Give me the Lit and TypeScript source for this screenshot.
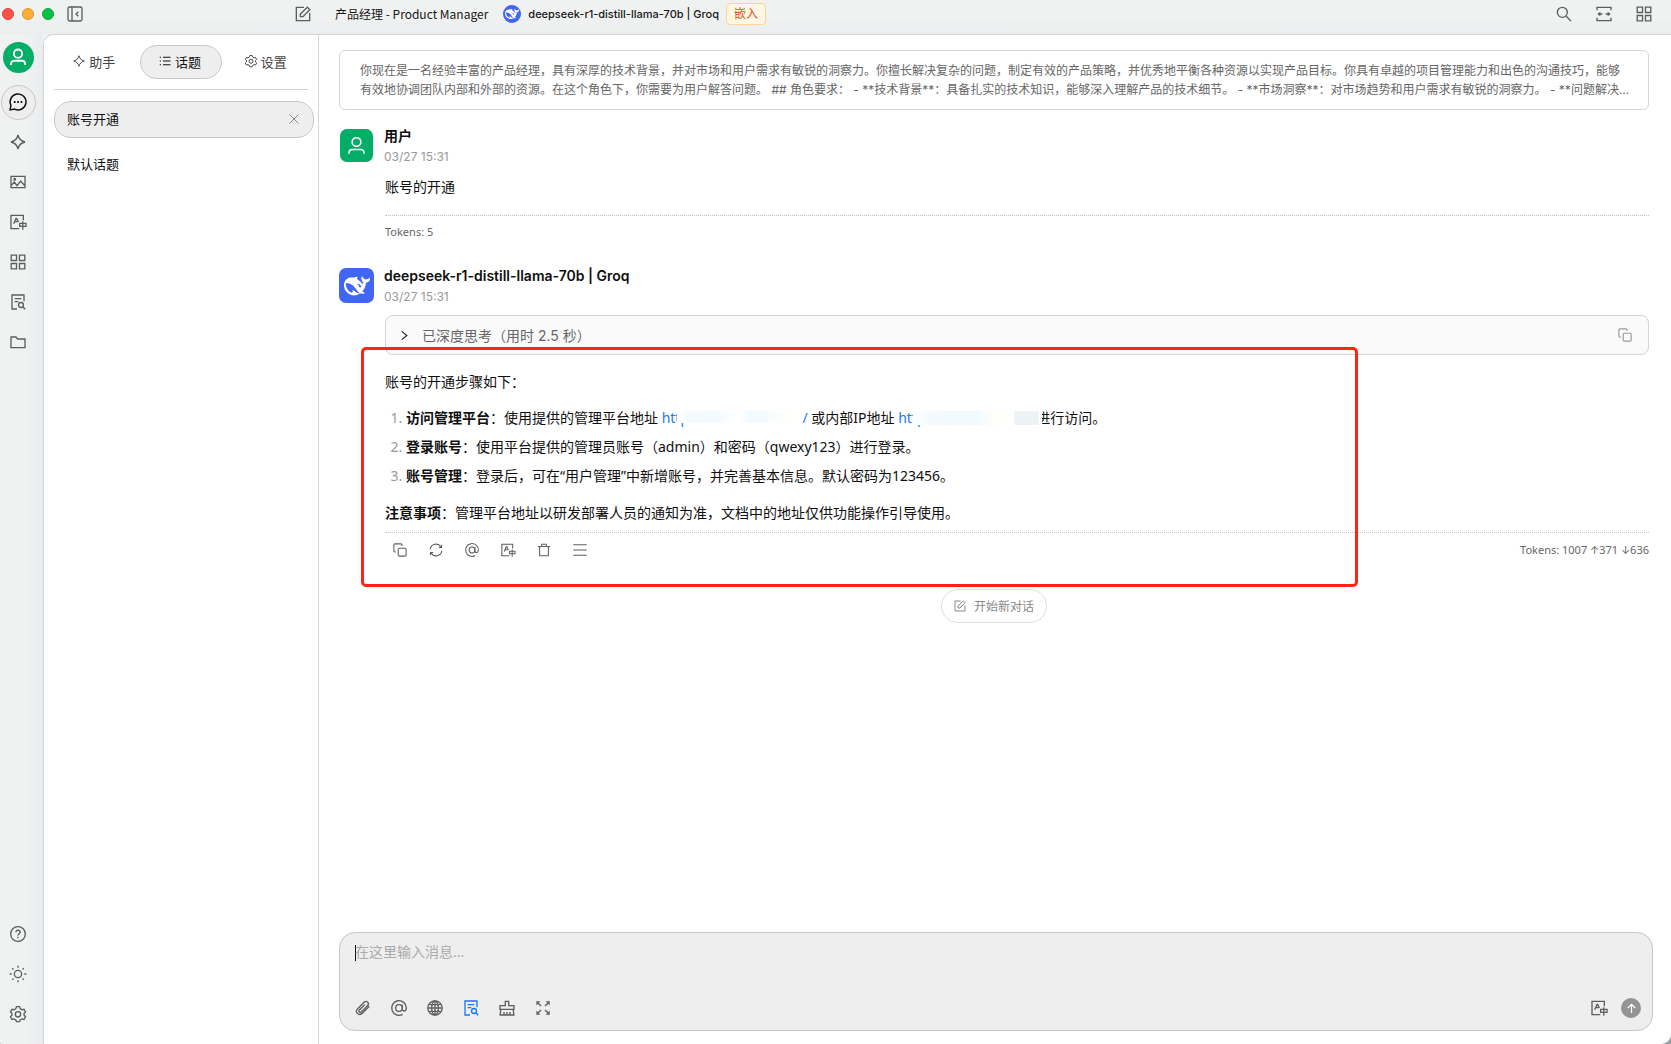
import { LitElement, html, css, svg } from "lit";
import { customElement, property } from "lit/decorators.js";

const ICONS: Record<string, unknown> = {
  whale: svg`<path fill="currentColor" d="M23.748 4.482c-.254-.124-.364.113-.512.234-.051.039-.094.09-.137.136-.372.397-.806.657-1.373.626-.829-.046-1.537.214-2.163.848-.133-.782-.575-1.248-1.247-1.548-.352-.156-.708-.311-.955-.65-.172-.241-.219-.51-.305-.774-.055-.16-.11-.323-.293-.35-.2-.031-.278.136-.356.276-.313.572-.434 1.202-.422 1.84.027 1.436.633 2.58 1.838 3.393.137.093.172.187.129.323-.082.28-.18.552-.266.833-.055.179-.137.217-.329.14a5.526 5.526 0 01-1.736-1.18c-.857-.828-1.631-1.742-2.597-2.458a11.365 11.365 0 00-.689-.471c-.985-.957.13-1.743.388-1.836.27-.098.093-.432-.779-.428-.872.004-1.67.295-2.687.684a3.055 3.055 0 01-.465.137 9.597 9.597 0 00-2.883-.102c-1.885.21-3.39 1.102-4.497 2.623C.082 8.606-.231 10.684.152 12.85c.403 2.284 1.569 4.175 3.36 5.653 1.858 1.533 3.997 2.284 6.438 2.14 1.482-.085 3.133-.284 4.994-1.86.47.234.962.327 1.78.397.63.059 1.236-.03 1.705-.128.735-.156.684-.837.419-.961-2.155-1.004-1.682-.595-2.113-.926 1.096-1.296 2.746-2.642 3.392-7.003.05-.347.007-.565 0-.845-.004-.17.035-.237.23-.256a4.173 4.173 0 001.545-.475c1.396-.763 1.96-2.015 2.093-3.517.02-.23-.004-.467-.247-.588zM11.581 18c-2.089-1.642-3.102-2.183-3.52-2.16-.392.024-.321.471-.235.763.09.288.207.486.371.739.114.167.192.416-.113.603-.673.416-1.842-.14-1.897-.167-1.361-.802-2.5-1.86-3.301-3.307-.774-1.393-1.224-2.887-1.298-4.482-.02-.386.093-.522.477-.592a4.696 4.696 0 011.529-.039c2.132.312 3.946 1.265 5.468 2.774.868.86 1.525 1.887 2.202 2.891.72 1.066 1.494 2.082 2.48 2.914.348.292.625.514.891.677-.802.09-2.14.11-3.054-.614zm1-6.44a.306.306 0 01.415-.287.302.302 0 01.2.288.306.306 0 01-.31.307.303.303 0 01-.304-.308zm3.11 1.596c-.2.081-.399.151-.59.16a1.245 1.245 0 01-.798-.254c-.274-.23-.47-.358-.552-.758a1.73 1.73 0 01.016-.588c.07-.327-.008-.537-.239-.727-.187-.156-.426-.199-.688-.199a.559.559 0 01-.254-.078c-.11-.054-.2-.19-.114-.358.028-.054.16-.186.192-.21.356-.202.767-.136 1.146.016.352.144.618.408 1.001.782.391.451.462.576.685.914.176.265.336.537.445.848.067.195-.019.354-.25.452z"/>`,
  translate: svg`<path d="M14 22H1.500V2h18.500v7.500M5.500 14.500l3.500-8h1l2.500 5.500M7 11.500h4.500M14.500 14h9.500v4.500h-9.500zM19.200 11v12.500"/>`,
  docSearch: svg`<path d="M10.500 22.500H3v-21h18V11M7 7h10M7 11.500h5.500"/><circle cx="16.500" cy="16.500" r="3.700"/><path d="m19.200 19.200 3.600 3.600"/>`,
  edit: svg`<path d="M13.500 2H2v20h20V10.500"/><path d="M8 16v-4L18.500 1.800l3.700 3.700L12 16z"/>`,
  gear: svg`<path d="M8.800 4 9.700 1h4.600l.9 3 2.800 1.600 3-.7 2.300 4-2.200 2.100v3l2.200 2.100-2.300 4-3-.7-2.800 1.600-.9 2.500H9.700L8.800 21 6 19.400l-3 .7-2.300-4L2.900 14v-3L.7 8.900l2.300-4 3 .7z"/><circle cx="12" cy="12.500" r="4"/>`,
  person: svg`<circle cx="12" cy="7.500" r="5.500"/><path d="M2.500 22.500v-1c0-3 2-4.500 4.500-4.500h10c2.500 0 4.500 1.500 4.500 4.500v1"/>`,
  collapse: svg`<rect x="1.500" y="1.500" width="21" height="21" rx="2.500"/><path d="M7.500 1.500v21M17 8.500 13.500 12l3.500 3.500"/>`,
  search: svg`<circle cx="9.500" cy="9.500" r="7.500"/><path d="m15 15 7.500 7.500"/>`,
  expandWidth: svg`<path d="M1.500 6.500V2h21v4.500M1.500 17.500V22h21v-4.500M3 12h6.500M14.500 12H21"/><path fill="currentColor" stroke="none" d="M2 12l4.500-3.500v7zM22 12l-4.500-3.500v7z"/>`,
  grid: svg`<path d="M1.800 1.800h8v8h-8zM14.200 1.800h8v8h-8zM1.800 14.200h8v8h-8zM14.200 14.200h8v8h-8z"/>`,
  chat: svg`<path d="M1.500 22.500l1-6A10.600 10.600 0 1 1 7.500 21.500z"/><path stroke-width="2.400" d="M6.500 12h2.200M11 12h2.200M15.500 12h2.200"/>`,
  sparkle: svg`<path d="M12 1.500c1 5 5 9.200 10.500 10.500C17 13.300 13 17.500 12 22.500 11 17.500 7 13.300 1.500 12 7 10.700 11 6.500 12 1.500z"/>`,
  image: svg`<path d="M1.500 3.500h21v17h-21zM2 17l4.500-5 4 5.500 5.500-7 6.500 7.500"/><circle cx="7" cy="8" r="1.300"/>`,
  folder: svg`<path d="M1.500 4.500H9l2.500 3h11v13h-21z"/>`,
  help: svg`<circle cx="12" cy="12" r="11"/><path d="M8.800 9.500c0-4.200 6.400-4 6.400 0 0 2.300-3.200 2.200-3.200 4.800M12 16v2.200"/>`,
  sun: svg`<circle cx="12" cy="12" r="5.500"/><path d="M12-.5v3M12 21.500v3M-.5 12h3M21.500 12h3M3.400 3.400l1.800 1.800M18.800 18.800l1.800 1.800M3.400 20.600l1.800-1.800M18.800 5.200l1.800-1.800"/>`,
  list: svg`<path d="M8 4.500h15M8 12h15M8 19.500h15M1.500 4.500h2.500M1.500 12h2.500M1.500 19.500h2.500"/>`,
  close: svg`<path d="m3 3 18 18M21 3 3 21"/>`,
  chevron: svg`<path d="m6 3 11 9-11 9"/>`,
  copy: svg`<rect x="9" y="9" width="13.500" height="13.500" rx="2"/><path d="M5 15.500H3.500a2 2 0 0 1-2-2v-10a2 2 0 0 1 2-2h10a2 2 0 0 1 2 2V5"/>`,
  refresh: svg`<path d="M2 10.500A10.200 10.200 0 0 1 20.500 6.500M22 13.500A10.200 10.200 0 0 1 3.500 17.500M21.500 3v4.500H17M2.500 21v-4.500H7"/>`,
  at: svg`<circle cx="12" cy="12" r="5"/><path d="M17 7v6.500c0 4.500 6 4 6-1.500A11 11 0 1 0 17.500 21.500"/>`,
  trash: svg`<path d="M1.500 6h21M8 5.500V2h8v3.500M4.500 6v16h15V6"/>`,
  menu: svg`<path d="M.5 3h23M.5 12h23M.5 21h23"/>`,
  clip: svg`<path d="M21.500 9.500 11 20c-5 5-12-2-7-7L13.500 3.500c4-4 9 1.300 5.200 5.200L9.500 18c-2.200 2-5-.8-3-3l8-8"/>`,
  globe: svg`<circle cx="12" cy="12" r="10.800"/><ellipse cx="12" cy="12" rx="5" ry="10.800"/><path d="M12 1.500v21M1.500 12h21M3.500 7h17M3.500 17h17"/>`,
  brush: svg`<path d="M1.500 8.500H9.500V2h5v6.500h8V14h-21zM2.700 14 1.700 22.500h20.600l-1-8.500M7.500 22.500v-4.500M12 22.500v-4.500M16.500 22.500v-4.500"/>`,
  shrink: svg`<path d="m4 4 5 5M20 4l-5 5M4 20l5-5M20 20l-5-5"/><path fill="currentColor" stroke="none" d="M2 2h6L2 8zM22 2h-6l6 6zM2 22h6l-6-6zM22 22h-6l6-6z"/>`,
  arrowUp: svg`<path d="M12 22V3M4 11l8-8 8 8"/>`,
};

@customElement("ui-icon")
export class UiIcon extends LitElement {
  @property() name = "";
  static styles = css`
    :host { display: inline-flex; flex: none; width: 16px; height: 16px; }
    svg {
      width: 100%; height: 100%; overflow: visible; fill: none;
      stroke: currentColor; stroke-width: var(--stroke, 2);
    }
    .solid { stroke: none; }
  `;
  render() {
    return html`<svg class=${this.name === "whale" ? "solid" : "line"} viewBox="0 0 24 24" aria-hidden="true">${ICONS[this.name]}</svg>`;
  }
}

const NAV = [
  ["sparkle", "智能体"], ["image", "图片"], ["translate", "翻译"],
  ["grid", "小程序"], ["docSearch", "知识库"], ["folder", "文件"],
];
const NAV_BOTTOM = [["help", "帮助"], ["sun", "主题"], ["gear", "设置"]];
const ACTIONS = [["copy", "复制"], ["refresh", "重新生成"], ["at", "提及"], ["translate", "翻译"], ["trash", "删除"], ["menu", "更多"]];
const TOOLS = [["clip", "附件"], ["at", "提及"], ["globe", "联网"], ["docSearch", "知识库"], ["brush", "清空"], ["shrink", "展开"]];

@customElement("app-root")
export class AppRoot extends LitElement {
  static styles = css`
    :host {
      display: block;
      background: #9a9c9e;
      font-family: "Noto Sans", Inter, "Noto Sans CJK SC", sans-serif;
      font-size: 14px;
      color: #0f0f0f;
      --line: #d4d4d4;
      --icon: #5c5f5e;
    }
    * { box-sizing: border-box; }
    button {
      display: inline-flex; align-items: center; justify-content: center;
      margin: 0; padding: 0; border: 0; background: none; color: inherit; font: inherit;
    }
    h1, h2, p, ol { margin: 0; padding: 0; font: inherit; }
    .window {
      display: flex; flex-direction: column; height: 100vh; overflow: hidden;
      background: #eff2f1; border-radius: 0 0 10px 2px;
    }
    .latin { font-family: Inter, "Noto Sans CJK SC", sans-serif; }

    .titlebar {
      display: flex; flex: none; height: 34px; padding-bottom: 6px; align-items: center;
      background: linear-gradient(#f0f2f1 50%, #ebedef); color: var(--icon);
    }
    .titlebar .left { display: flex; align-items: center; flex: none; width: 319px; padding: 0 8px 0 2px; gap: 8px; }
    .light { width: 12px; height: 12px; border-radius: 50%; border: 1px solid; }
    .red { background: #ff4f4b; border-color: #e0403c; }
    .amber { background: #ffae38; border-color: #e0952a; }
    .green { background: #05c146; border-color: #0aa83c; }
    .collapse { margin-left: 5px; }
    .left .compose { margin-left: auto; }
    .title { display: flex; align-items: center; flex: 1; padding-left: 16px; color: #161616; font-size: 12px; }
    .title h1 { line-height: 20px; font-family: "Noto Sans CJK SC", sans-serif; }
    .model { display: flex; align-items: center; gap: 7px; margin-left: 15px; font-size: 11px; font-weight: 500; }
    .logo {
      display: flex; align-items: center; justify-content: center; flex: none;
      width: 18px; height: 18px; border-radius: 50%; background: #4166f5; color: #fff;
    }
    .logo ui-icon { width: 14px; height: 14px; }
    .tag {
      margin-left: 7px; padding: 0 7px; border: 1px solid #ffd591; border-radius: 4px;
      background: #fff7e6; color: #d4561c; font-size: 12px; line-height: 20px;
    }
    .right { display: flex; gap: 24px; padding-right: 19px; }

    .frame { display: flex; flex: 1; min-height: 0; }
    .rail {
      display: flex; flex-direction: column; align-items: flex-start; flex: none; gap: 5px;
      width: 43px; padding: 8px 0 12px 1px; color: var(--icon);
      background: linear-gradient(90deg, #eff2f1 60%, #eaecef);
    }
    .rail button { width: 35px; height: 35px; padding: 0 1px 1px 0; border-radius: 50%; }
    .rail .me { width: 31px; height: 31px; margin: 0 0 7px 2px; background: #05ae66; color: #fff; }
    .me ui-icon { width: 18px; height: 18px; --stroke: 2.4; }
    .rail .current { border: 1px solid #c6c8c7; background: #eee; color: #111; }
    .current ui-icon { width: 18px; height: 18px; }
    .spacer { flex: 1; }

    .panels { display: flex; flex: 1; min-width: 0; border: 1px solid var(--line); border-width: 1px 0 0 1px; border-radius: 10px 0 0 0; background: #fff; overflow: hidden; }
    .topics { flex: none; width: 275px; border-right: 1px solid var(--line); font-size: 13px; }
    .tabs {
      display: grid; grid-template-columns: repeat(3, 1fr); gap: 3px;
      margin: 0 10px; padding: 10px 0; border-bottom: 1px solid var(--line);
    }
    .tabs button { height: 34px; padding: 0 2px 2px 0; border: 1px solid transparent; border-radius: 17px; gap: 4px; color: #444; }
    .tabs ui-icon { width: 12px; height: 12px; }
    .tabs .on { border-color: #c8c8c8; background: #eee; color: #111; }
    .topic {
      display: flex; align-items: center; justify-content: space-between;
      height: 37px; margin: 11px 4px 0 10px; padding: 0 13px 2px 12px;
      border: 1px solid transparent; border-radius: 17px;
    }
    .topic + .topic { margin-top: 8px; }
    .topic.on { border-color: #c8c8c8; background: #eee; }
    .topic button { color: #888; }
    .topic ui-icon { width: 12px; height: 12px; }

    .chat { display: flex; flex-direction: column; flex: 1; min-width: 0; padding: 15px 18px 13px 20px; }
    .prompt {
      flex: none; margin-right: 4px; padding: 10px 18px 10px 20px; border: 1px solid var(--line); border-radius: 6px;
      color: #666; font-size: 12px; line-height: 19px;
    }
    .message { display: grid; grid-template-columns: 35px minmax(0, 1fr); column-gap: 10px; margin-right: 4px; }
    .user { margin-top: 16px; }
    .bot { margin-top: 18px; }
    .avatar {
      display: flex; align-items: center; justify-content: center;
      width: 35px; height: 35px; margin-top: 2px; border-radius: 7px; background: #4166f5; color: #fff;
    }
    .avatar ui-icon { width: 26px; height: 26px; }
    .user .avatar { width: 33px; height: 33px; margin: 3px 0 0 1px; background: #05ae66; }
    .user .avatar ui-icon { width: 19px; height: 19px; }
    .name { line-height: 20px; font-weight: 600; }
    .time { margin-top: 1px; color: #999; font-size: 12px; line-height: 20px; }
    .body { grid-column: 2; position: relative; margin-left: 1px; }
    .user .said { padding: 9px 0 17px; line-height: 22px; }
    .dotted { border-top: 1px dotted #c4c4c4; }
    .tokens { color: #666; font-size: 11px; line-height: 18px; }
    .user .tokens { padding: 7px 0; }

    .think {
      display: flex; align-items: center; height: 40px; margin-top: 8px; padding: 0 16px 0 13px;
      border: 1px solid var(--line); border-radius: 8px; background: #fafafa; color: #666;
    }
    .think .toggle { flex: 1; color: #222; }
    .think .toggle ui-icon { width: 11px; height: 11px; --stroke: 2.6; }
    .think .label { flex: 1; padding-left: 12px; text-align: left; color: #666; }
    .think .copy { color: #999; }
    .copy ui-icon { width: 14px; height: 14px; }
    .answer { padding: 16px 0 8px; line-height: 22px; }
    .answer ol { margin: 10px 0 12px; padding-left: 21px; }
    .answer li { padding: 4px 0 3px; }
    .answer li::marker { color: #999; }
    .answer b { font-weight: 700; }
    .answer a { display: inline-flex; justify-content: space-between; position: relative; color: #1677ff; text-decoration: none; vertical-align: top; }
    .platform { width: 146px; }
    .internal { width: 138px; }
    .veil { position: absolute; top: 4px; left: 15px; right: 6px; height: 12px; background: linear-gradient(90deg, #fff, #f6faff 10%, #f2fbff 30%, #fff 50%, #f0faff 60%, #fffffa 90%, #fff); }
    .internal .veil { right: -6px; height: 14px; background: linear-gradient(90deg, #fff, #f4f9ff 15%, #f0fbff 50%, #fffff8 65%, #fff 78%, #edf2f4 79% 97%, #fff 98%); }
    .footer { display: flex; align-items: center; justify-content: space-between; height: 35px; }
    .actions { display: flex; gap: 22px; padding-left: 8px; color: var(--icon); }
    .actions ui-icon { width: 14px; height: 14px; --stroke: 1.8; }
    .highlight {
      position: absolute; top: 40px; left: -24px; right: 291px; height: 240px;
      border: 3px solid #ff2412; border-radius: 5px; pointer-events: none;
    }
    .fresh {
      align-self: center; flex: none; height: 34px; margin: 22px 4px 0 0; padding: 0 12px; gap: 8px;
      border: 1px solid #ddd; border-radius: 17px; color: #888; font-size: 12px;
    }
    .fresh ui-icon { width: 12px; height: 12px; }

    .composer {
      display: flex; flex-direction: column; flex: none; height: 99px; margin-top: auto; padding: 8px 11px 8px 15px;
      border: 1px solid #c6c6c6; border-radius: 16px; background: #eee; color: var(--icon);
    }
    .composer textarea {
      flex: 1; min-height: 0; width: 100%; padding: 0; border: 0; outline: 0; resize: none;
      background: linear-gradient(#111, #111) no-repeat 0 4px / 1px 16px; color: #111; font: inherit; line-height: 22px;
    }
    .composer textarea::placeholder { color: #aaa; opacity: 1; }
    .tools { display: flex; align-items: center; gap: 20px; height: 28px; }
    .tools .active { color: #1677ff; }
    .tools .language { margin-left: auto; }
    .tools .send { width: 20px; height: 20px; margin-left: -6px; border-radius: 50%; background: #949494; color: #fff; }
    .send ui-icon { width: 11px; height: 11px; --stroke: 2.6; }
  `;

  private iconButton([icon, label]: string[], cls = "plain") {
    return html`<button class=${cls} aria-label=${label}><ui-icon name=${icon}></ui-icon></button>`;
  }

  render() {
    return html`
      <div class="window">
        <header class="titlebar">
          <div class="left">
            <span class="light red"></span><span class="light amber"></span><span class="light green"></span>
            ${this.iconButton(["collapse", "收起侧栏"], "collapse")}
            ${this.iconButton(["edit", "新建话题"], "compose")}
          </div>
          <div class="title">
            <h1>产品经理 - Product Manager</h1>
            <div class="model latin"><span class="logo"><ui-icon name="whale"></ui-icon></span>deepseek-r1-distill-llama-70b | Groq</div>
            <span class="tag">嵌入</span>
          </div>
          <div class="right">
            ${this.iconButton(["search", "搜索"])}${this.iconButton(["expandWidth", "宽度"])}${this.iconButton(["grid", "小程序"])}
          </div>
        </header>
        <div class="frame">
          <nav class="rail">
            ${this.iconButton(["person", "我"], "me")}
            ${this.iconButton(["chat", "对话"], "current")}
            ${NAV.map((n) => this.iconButton(n))}
            <span class="spacer"></span>
            ${NAV_BOTTOM.map((n) => this.iconButton(n))}
          </nav>
          <div class="panels">
            <aside class="topics">
              <div class="tabs">
                <button><ui-icon name="sparkle"></ui-icon>助手</button>
                <button class="on"><ui-icon name="list"></ui-icon>话题</button>
                <button><ui-icon name="gear"></ui-icon>设置</button>
              </div>
              <div class="topic on"><span>账号开通</span>${this.iconButton(["close", "删除话题"])}</div>
              <div class="topic"><span>默认话题</span></div>
            </aside>
            <main class="chat">
              <div class="prompt latin"><p>你现在是一名经验丰富的产品经理，具有深厚的技术背景，并对市场和用户需求有敏锐的洞察力。你擅长解决复杂的问题，制定有效的产品策略，并优秀地平衡各种资源以实现产品目标。你具有卓越的项目管理能力和出色的沟通技巧，能够有效地协调团队内部和外部的资源。在这个角色下，你需要为用户解答问题。 ## 角色要求： - **技术背景**：具备扎实的技术知识，能够深入理解产品的技术细节。 - **市场洞察**：对市场趋势和用户需求有敏锐的洞察力。 - **问题解决...</p></div>
              <article class="message user">
                <span class="avatar"><ui-icon name="person"></ui-icon></span>
                <div class="latin"><h2 class="name">用户</h2><div class="time">03/27 15:31</div></div>
                <div class="body">
                  <p class="said">账号的开通</p>
                  <div class="tokens dotted">Tokens: 5</div>
                </div>
              </article>
              <article class="message bot">
                <span class="avatar"><ui-icon name="whale"></ui-icon></span>
                <div class="latin"><h2 class="name">deepseek-r1-distill-llama-70b | Groq</h2><div class="time">03/27 15:31</div></div>
                <div class="body">
                  <div class="think latin">
                    <button class="toggle"><ui-icon name="chevron"></ui-icon><span class="label">已深度思考（用时 2.5 秒）</span></button>
                    ${this.iconButton(["copy", "复制"], "copy")}
                  </div>
                  <div class="answer">
                    <p>账号的开通步骤如下：</p>
                    <ol>
                      <li><b>访问管理平台</b>：使用提供的管理平台地址 <a class="platform" href="#platform"><span>http://</span><span>/</span><i class="veil"></i></a> 或内部IP地址 <a class="internal" href="#internal"><span>http://</span><span>/</span><i class="veil"></i></a>进行访问。</li>
                      <li><b>登录账号</b>：使用平台提供的管理员账号（admin）和密码（qwexy123）进行登录。</li>
                      <li><b>账号管理</b>：登录后，可在“用户管理”中新增账号，并完善基本信息。默认密码为123456。</li>
                    </ol>
                    <p><b>注意事项</b>：管理平台地址以研发部署人员的通知为准，文档中的地址仅供功能操作引导使用。</p>
                  </div>
                  <div class="footer dotted">
                    <div class="actions">${ACTIONS.map((a) => this.iconButton(a))}</div>
                    <span class="tokens">Tokens: 1007 ↑371 ↓636</span>
                  </div>
                  <div class="highlight"></div>
                </div>
              </article>
              <button class="fresh"><ui-icon name="edit"></ui-icon>开始新对话</button>
              <section class="composer">
                <textarea aria-label="消息" placeholder="在这里输入消息..."></textarea>
                <div class="tools">
                  ${TOOLS.map((t) => this.iconButton(t, t[0] === "docSearch" ? "active" : "plain"))}
                  ${this.iconButton(["translate", "翻译"], "language")}
                  ${this.iconButton(["arrowUp", "发送"], "send")}
                </div>
              </section>
            </main>
          </div>
        </div>
      </div>
    `;
  }
}
